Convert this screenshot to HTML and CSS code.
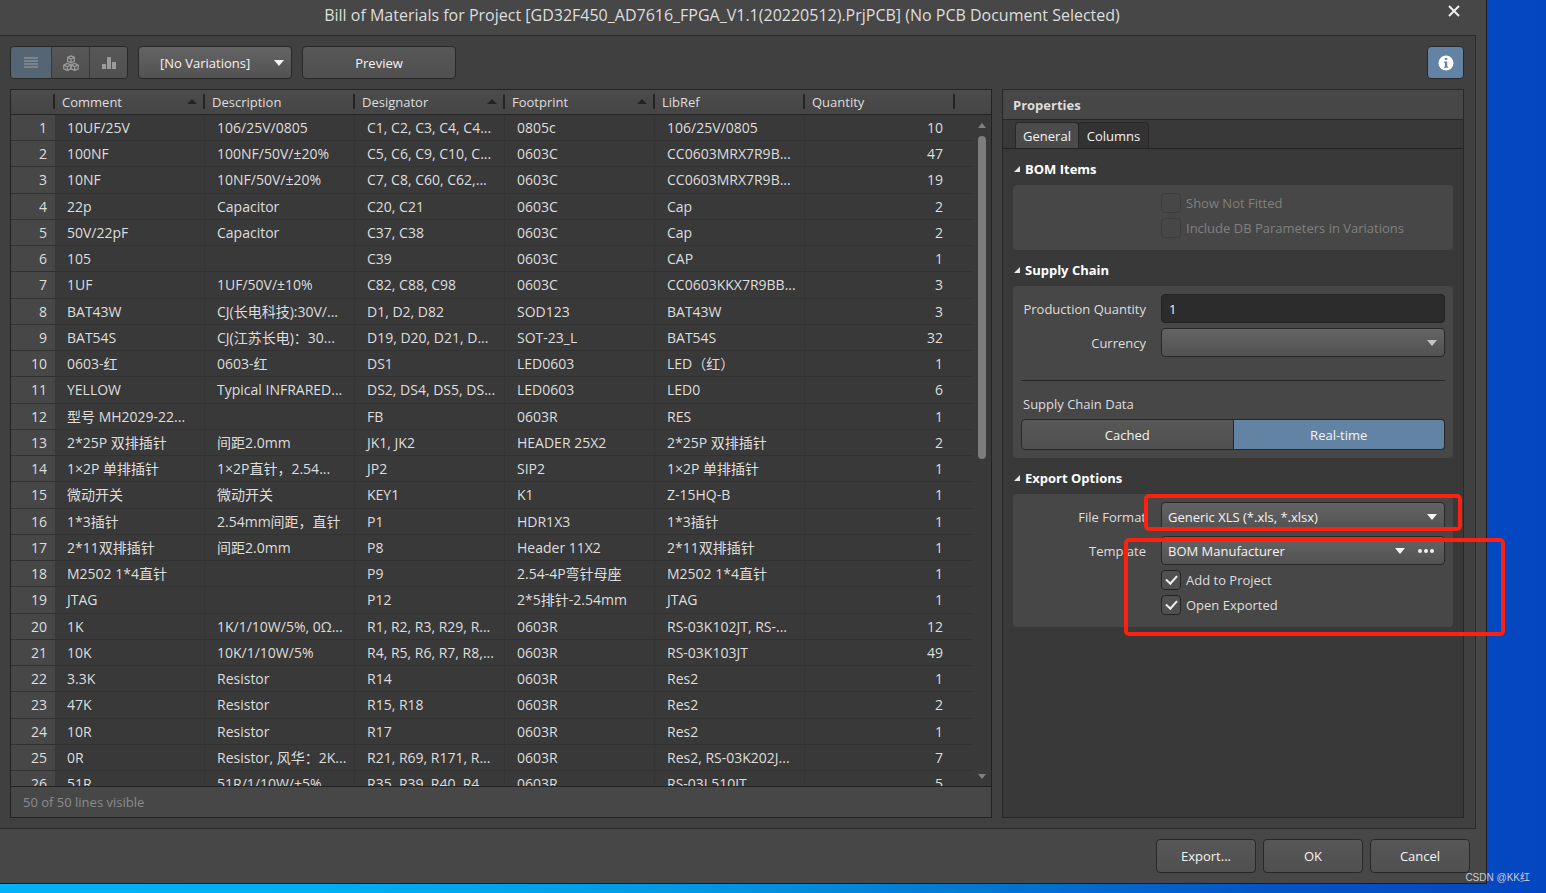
FILE: index.html
```html
<!DOCTYPE html>
<html lang="en">
<head>
  <meta charset="utf-8">
  <title>Bill of Materials</title>
  <link rel="stylesheet" href="styles.css">
</head>
<body>
  <div class="window">
    <header class="titlebar">
      <h1>Bill of Materials for Project [GD32F450_AD7616_FPGA_V1.1(20220512).PrjPCB] (No PCB Document Selected)</h1>
      <button type="button" class="close" aria-label="Close">
        <svg width="12" height="12" viewBox="0 0 12 12"><path d="M1 1L11 11M11 1L1 11" stroke="#f0f0f0" stroke-width="2" fill="none"/></svg>
      </button>
    </header>

    <main class="content">
      <div class="toolbar">
        <div class="views">
          <button type="button" class="active" aria-label="List view">
            <svg width="14" height="11" viewBox="0 0 14 11"><path d="M0 1h14M0 4h14M0 7h14M0 10h14" stroke="#a0a4a8" stroke-width="1.2"/></svg>
          </button>
          <button type="button" aria-label="Grouped view">
            <svg width="16" height="16" viewBox="0 0 16 16" fill="none" stroke="#9a9a9a" stroke-width="1.3" stroke-linejoin="round">
              <path d="M8 .8L11.4 2.4V6.2L8 7.8L4.6 6.2V2.4ZM4.6 2.4L8 4L11.4 2.4M8 4V7.8"/>
              <path d="M4.4 8.4L7.8 10V13.8L4.4 15.3L.8 13.8V10ZM.8 10L4.4 11.6L7.8 10M4.4 11.6V15.3"/>
              <path d="M11.6 8.4L15.2 10V13.8L11.6 15.3L8.2 13.8V10ZM8.2 10L11.6 11.6L15.2 10M11.6 11.6V15.3"/>
            </svg>
          </button>
          <button type="button" aria-label="Chart view">
            <svg width="14" height="12" viewBox="0 0 14 12" fill="#9a9a9a"><path d="M0 7h4v5H0zM5 0h4v12H5zM10 5h4v7h-4z"/></svg>
          </button>
        </div>
        <div class="select variations">
          <select aria-label="Variations"><option>[No Variations]</option></select>
          <svg class="caret" width="10" height="6" viewBox="0 0 10 6"><path d="M0 0h10L5 6z"/></svg>
        </div>
        <button type="button" class="preview">Preview</button>
        <button type="button" class="info" aria-label="Properties">
          <svg width="16" height="16" viewBox="0 0 16 16"><circle cx="8" cy="8" r="7.5" fill="#fff"/><path d="M6.9 3h2.3v2.1H6.9zM6 6.4h3.2v5h1v1.4H6v-1.4h1V7.8H6z" fill="#6283a4"/></svg>
        </button>
      </div>

      <div class="panels">
        <section class="bom">
          <div class="grid">
            <table>
              <colgroup><col class="num"><col><col><col><col><col><col><col class="rest"></colgroup>
              <thead>
                <tr>
                  <th></th>
                  <th class="sorted">Comment</th>
                  <th>Description</th>
                  <th class="sorted">Designator</th>
                  <th class="sorted">Footprint</th>
                  <th>LibRef</th>
                  <th>Quantity</th>
                  <th></th>
                </tr>
              </thead>
              <tbody>
                <tr><th>1</th><td>10UF/25V</td><td>106/25V/0805</td><td>C1, C2, C3, C4, C4...</td><td>0805c</td><td>106/25V/0805</td><td>10</td><td></td></tr>
                <tr><th>2</th><td>100NF</td><td>100NF/50V/±20%</td><td>C5, C6, C9, C10, C...</td><td>0603C</td><td>CC0603MRX7R9B...</td><td>47</td><td></td></tr>
                <tr><th>3</th><td>10NF</td><td>10NF/50V/±20%</td><td>C7, C8, C60, C62,...</td><td>0603C</td><td>CC0603MRX7R9B...</td><td>19</td><td></td></tr>
                <tr><th>4</th><td>22p</td><td>Capacitor</td><td>C20, C21</td><td>0603C</td><td>Cap</td><td>2</td><td></td></tr>
                <tr><th>5</th><td>50V/22pF</td><td>Capacitor</td><td>C37, C38</td><td>0603C</td><td>Cap</td><td>2</td><td></td></tr>
                <tr><th>6</th><td>105</td><td></td><td>C39</td><td>0603C</td><td>CAP</td><td>1</td><td></td></tr>
                <tr><th>7</th><td>1UF</td><td>1UF/50V/±10%</td><td>C82, C88, C98</td><td>0603C</td><td>CC0603KKX7R9BB...</td><td>3</td><td></td></tr>
                <tr><th>8</th><td>BAT43W</td><td>CJ(长电科技):30V/...</td><td>D1, D2, D82</td><td>SOD123</td><td>BAT43W</td><td>3</td><td></td></tr>
                <tr><th>9</th><td>BAT54S</td><td>CJ(江苏长电)：30...</td><td>D19, D20, D21, D...</td><td>SOT-23_L</td><td>BAT54S</td><td>32</td><td></td></tr>
                <tr><th>10</th><td>0603-红</td><td>0603-红</td><td>DS1</td><td>LED0603</td><td>LED（红）</td><td>1</td><td></td></tr>
                <tr><th>11</th><td>YELLOW</td><td>Typical INFRARED...</td><td>DS2, DS4, DS5, DS...</td><td>LED0603</td><td>LED0</td><td>6</td><td></td></tr>
                <tr><th>12</th><td>型号 MH2029-22...</td><td></td><td>FB</td><td>0603R</td><td>RES</td><td>1</td><td></td></tr>
                <tr><th>13</th><td>2*25P 双排插针</td><td>间距2.0mm</td><td>JK1, JK2</td><td>HEADER 25X2</td><td>2*25P 双排插针</td><td>2</td><td></td></tr>
                <tr><th>14</th><td>1×2P 单排插针</td><td>1×2P直针，2.54...</td><td>JP2</td><td>SIP2</td><td>1×2P 单排插针</td><td>1</td><td></td></tr>
                <tr><th>15</th><td>微动开关</td><td>微动开关</td><td>KEY1</td><td>K1</td><td>Z-15HQ-B</td><td>1</td><td></td></tr>
                <tr><th>16</th><td>1*3插针</td><td>2.54mm间距，直针</td><td>P1</td><td>HDR1X3</td><td>1*3插针</td><td>1</td><td></td></tr>
                <tr><th>17</th><td>2*11双排插针</td><td>间距2.0mm</td><td>P8</td><td>Header 11X2</td><td>2*11双排插针</td><td>1</td><td></td></tr>
                <tr><th>18</th><td>M2502 1*4直针</td><td></td><td>P9</td><td>2.54-4P弯针母座</td><td>M2502 1*4直针</td><td>1</td><td></td></tr>
                <tr><th>19</th><td>JTAG</td><td></td><td>P12</td><td>2*5排针-2.54mm</td><td>JTAG</td><td>1</td><td></td></tr>
                <tr><th>20</th><td>1K</td><td>1K/1/10W/5%, 0Ω...</td><td>R1, R2, R3, R29, R...</td><td>0603R</td><td>RS-03K102JT, RS-...</td><td>12</td><td></td></tr>
                <tr><th>21</th><td>10K</td><td>10K/1/10W/5%</td><td>R4, R5, R6, R7, R8,...</td><td>0603R</td><td>RS-03K103JT</td><td>49</td><td></td></tr>
                <tr><th>22</th><td>3.3K</td><td>Resistor</td><td>R14</td><td>0603R</td><td>Res2</td><td>1</td><td></td></tr>
                <tr><th>23</th><td>47K</td><td>Resistor</td><td>R15, R18</td><td>0603R</td><td>Res2</td><td>2</td><td></td></tr>
                <tr><th>24</th><td>10R</td><td>Resistor</td><td>R17</td><td>0603R</td><td>Res2</td><td>1</td><td></td></tr>
                <tr><th>25</th><td>0R</td><td>Resistor, 风华：2K...</td><td>R21, R69, R171, R...</td><td>0603R</td><td>Res2, RS-03K202J...</td><td>7</td><td></td></tr>
                <tr><th>26</th><td>51R</td><td>51R/1/10W/±5%</td><td>R35, R39, R40, R4...</td><td>0603R</td><td>RS-03L510JT</td><td>5</td><td></td></tr>
              </tbody>
            </table>
            <div class="scrollbar">
              <svg width="8" height="5" viewBox="0 0 8 5"><path d="M0 5h8L4 0z"/></svg>
              <div class="track"><div class="thumb"></div></div>
              <svg width="8" height="5" viewBox="0 0 8 5"><path d="M0 0h8L4 5z"/></svg>
            </div>
          </div>
          <div class="status">50 of 50 lines visible</div>
        </section>

        <aside class="properties">
          <h2>Properties</h2>
          <div class="tabs">
            <button type="button" class="active">General</button>
            <button type="button">Columns</button>
          </div>

          <h3>BOM Items</h3>
          <div class="group">
            <label class="check disabled"><input type="checkbox" disabled>Show Not Fitted</label>
            <label class="check disabled"><input type="checkbox" disabled>Include DB Parameters in Variations</label>
          </div>

          <h3>Supply Chain</h3>
          <div class="group supply">
            <div class="field">
              <label for="quantity">Production Quantity</label>
              <input type="text" id="quantity" value="1">
            </div>
            <div class="field">
              <label for="currency">Currency</label>
              <div class="select dim">
                <select id="currency"><option></option></select>
                <svg class="caret" width="10" height="6" viewBox="0 0 10 6"><path d="M0 0h10L5 6z"/></svg>
              </div>
            </div>
            <hr>
            <p>Supply Chain Data</p>
            <div class="toggle">
              <button type="button">Cached</button>
              <button type="button" class="active">Real-time</button>
            </div>
          </div>

          <h3>Export Options</h3>
          <div class="group export">
            <div class="field">
              <label for="format">File Format</label>
              <div class="select">
                <select id="format"><option>Generic XLS (*.xls, *.xlsx)</option></select>
                <svg class="caret" width="10" height="6" viewBox="0 0 10 6"><path d="M0 0h10L5 6z"/></svg>
              </div>
            </div>
            <div class="field">
              <label for="template">Template</label>
              <div class="select template">
                <select id="template"><option>BOM Manufacturer</option></select>
                <svg class="caret" width="10" height="6" viewBox="0 0 10 6"><path d="M0 0h10L5 6z"/></svg>
                <button type="button" class="more" aria-label="Browse">
                  <svg width="16" height="4" viewBox="0 0 16 4" fill="#f0f0f0"><circle cx="2" cy="2" r="2"/><circle cx="8" cy="2" r="2"/><circle cx="14" cy="2" r="2"/></svg>
                </button>
              </div>
            </div>
            <label class="check"><input type="checkbox" checked>Add to Project</label>
            <label class="check"><input type="checkbox" checked>Open Exported</label>
            <div class="mark mark-format"></div>
            <div class="mark mark-template"></div>
          </div>
        </aside>
      </div>
    </main>

    <footer class="actions">
      <button type="button">Export...</button>
      <button type="button">OK</button>
      <button type="button">Cancel</button>
    </footer>
  </div>
  <div class="watermark">CSDN @KK红</div>
</body>
</html>
```

FILE: styles.css
```css
* {
  box-sizing: border-box;
}
body {
  margin: 0;
  height: 100vh;
  padding: 0 59px 9px 0;
  overflow: hidden;
  background: linear-gradient(90deg, #00b2fa 0, #00b0f6 20%, #0098e6 45%, #0078d4 63%, #0454c6 82%, #0446c0 100%);
  color: #dedede;
  font-family: "Open Sans", "Noto Sans CJK SC", sans-serif;
  font-size: 13px;
  line-height: 20px;
}
h1, h2, h3, p {
  margin: 0;
}
button, input, select {
  font: inherit;
  color: #f4f4f4;
}
button {
  padding: 0;
  background: linear-gradient(#575757, #505050);
  border: 1px solid #282828;
  border-radius: 4px;
}
svg {
  display: block;
}

.window {
  display: flex;
  flex-direction: column;
  height: 100%;
  background: #474747;
  border-right: 1px solid #1c1c1c;
  border-bottom: 1px solid #1c1c1c;
}
.titlebar {
  display: flex;
  height: 35px;
  padding: 5px 22px 0 0;
}
.titlebar h1 {
  flex: 1;
  padding-left: 0;
  text-align: center;
  white-space: nowrap;
  font-size: 16px;
  font-weight: normal;
}
.close {
  width: 20px;
  height: 12px;
  display: flex;
  align-items: center;
  justify-content: center;
  background: none;
  border: none;
}

.content {
  flex: 1;
  min-height: 0;
  display: flex;
  flex-direction: column;
  gap: 10px;
  margin-right: 10px;
  padding: 10px 11px 10px 10px;
  background: #404040;
  border: solid #2a2a2a;
  border-width: 1px 1px 1px 0;
}
.toolbar {
  display: flex;
  gap: 10px;
  height: 33px;
}
.views {
  display: flex;
  width: 118px;
  border: 1px solid #282828;
  border-radius: 4px;
  overflow: hidden;
}
.views button {
  width: 38px;
  display: flex;
  align-items: center;
  justify-content: center;
  border: none;
  border-radius: 0;
}
.views button + button {
  border-left: 1px solid #383838;
}
.views .active {
  width: 40px;
  background: #566573;
}
.preview {
  width: 154px;
}
.info {
  width: 37px;
  margin-left: auto;
  display: flex;
  align-items: center;
  justify-content: center;
  background: #6283a4;
}

.select {
  position: relative;
  display: flex;
  height: 29px;
  background: linear-gradient(#646464, #525252);
  border: 1px solid #282828;
  border-radius: 4px;
}
.select select {
  appearance: none;
  flex: 1;
  min-width: 0;
  padding: 0 24px 0 6px;
  background: none;
  border: none;
}
.caret {
  position: absolute;
  top: 50%;
  right: 7px;
  margin-top: -3px;
  fill: #f4f4f4;
  pointer-events: none;
}
.dim .caret {
  fill: #c4c4c4;
}
.variations {
  width: 154px;
  height: 33px;
}
.variations select {
  padding-left: 21px;
}

.panels {
  flex: 1;
  min-height: 0;
  display: flex;
  gap: 10px;
}
.bom {
  flex: 1;
  min-width: 0;
  display: flex;
  flex-direction: column;
  background: #393939;
  border: 1px solid #222;
}
.grid {
  flex: 1;
  min-height: 0;
  position: relative;
  overflow: hidden;
}
table {
  width: 100%;
  table-layout: fixed;
  border-collapse: separate;
  border-spacing: 0;
}
col {
  width: 150px;
}
.num {
  width: 44px;
}
.rest {
  width: auto;
}
th {
  font-weight: normal;
}
thead th {
  position: relative;
  height: 25px;
  padding: 0 0 0 7px;
  text-align: left;
  background: linear-gradient(#4c4c4c, #454545);
  border-bottom: 1px solid #262626;
}
thead th::after {
  content: "";
  position: absolute;
  top: 4px;
  right: 0;
  width: 2px;
  height: 15px;
  background: #242424;
}
thead th:last-child::after {
  display: none;
}
.sorted::before {
  content: "";
  position: absolute;
  top: 9px;
  right: 8px;
  border: solid transparent;
  border-width: 0 5px 5px;
  border-bottom-color: #242424;
}
tbody tr {
  height: 26px;
}
tbody tr:nth-child(4n+3) {
  height: 27px;
}
tbody th, tbody td {
  padding: 0 0 0 12px;
  overflow: hidden;
  white-space: nowrap;
  font-size: 14px;
  border-bottom: 1px solid #323232;
}
tbody th {
  padding: 0 8px 0 0;
  text-align: right;
  background: #474747;
}
tbody td {
  border-right: 1px solid #343434;
}
tbody td:nth-child(7) {
  padding-right: 12px;
  text-align: right;
  border-right: none;
}
.scrollbar {
  position: absolute;
  top: 25px;
  right: 0;
  bottom: 0;
  width: 18px;
  padding: 8px 0 7px;
  display: flex;
  flex-direction: column;
  align-items: center;
  background: #393939;
  fill: #808080;
}
.track {
  flex: 1;
  width: 8px;
  padding: 8px 0 5px;
}
.thumb {
  height: 51%;
  background: #7c7c7c;
  border-radius: 4px;
}
.status {
  height: 31px;
  padding: 5px 12px;
  color: #8c8c8c;
  background: #474747;
  border-top: 1px solid #222;
}

.properties {
  width: 462px;
  background: #393939;
  border: 1px solid #282828;
}
.properties h2 {
  height: 30px;
  padding: 5px 10px;
  font-size: 13px;
  background: #474747;
  border-bottom: 1px solid #282828;
}
.tabs {
  display: flex;
  height: 29px;
  padding: 2px 12px 0;
  border-bottom: 1px solid #222;
}
.tabs button {
  width: 71px;
  background: #333;
  border-bottom: none;
  border-radius: 4px 4px 0 0;
}
.tabs .active {
  width: 64px;
  margin-right: -1px;
  background: #4b4b4b;
}
h3 {
  display: flex;
  align-items: center;
  gap: 5px;
  height: 36px;
  padding: 4px 11px 0;
  color: #fff;
  font-size: 13px;
}
h3::before {
  content: "";
  border: solid transparent;
  border-width: 0 0 6px 6px;
  border-bottom-color: #e8e8e8;
}
.group {
  display: flex;
  flex-direction: column;
  gap: 5px;
  margin: 0 10px;
  padding: 8px 8px 12px;
  background: #474747;
  border-radius: 4px;
}
.field {
  display: grid;
  grid-template-columns: 125px 1fr;
  gap: 15px;
  align-items: center;
}
.field label {
  text-align: right;
  white-space: nowrap;
}
.field input {
  min-width: 0;
  height: 29px;
  padding: 0 7px;
  background: #2c2c2c;
  border: 1px solid #222;
  border-radius: 4px;
}
.supply {
  padding-bottom: 8px;
}
hr {
  width: 100%;
  height: 1px;
  margin: 18px 0 8px;
  background: #262626;
  border: none;
}
.supply p {
  padding-left: 2px;
}
.toggle {
  display: flex;
  height: 31px;
}
.toggle button {
  flex: 1;
  border-radius: 4px 0 0 4px;
}
.toggle .active {
  background: #6283a4;
  border-left: none;
  border-radius: 0 4px 4px 0;
}
.check {
  display: flex;
  align-items: center;
  gap: 5px;
  margin-left: 140px;
}
.check input {
  appearance: none;
  display: grid;
  place-items: center;
  width: 20px;
  height: 20px;
  margin: 0;
  background: #505050;
  border: 1px solid #242424;
  border-radius: 4px;
}
.check input:checked::after {
  content: "";
  width: 5px;
  height: 9px;
  margin-bottom: 3px;
  border: solid #f0f0f0;
  border-width: 0 2px 2px 0;
  transform: rotate(42deg);
}
.disabled {
  color: #808080;
}
.disabled input {
  background: #474747;
  border-color: #3d3d3d;
}
.template select {
  padding-right: 60px;
}
.template .caret {
  right: 39px;
}
.more {
  position: absolute;
  top: 12px;
  right: 10px;
  background: none;
  border: none;
}

/* red callouts over the export settings */
.export {
  position: relative;
}
.mark {
  position: absolute;
  border: 4px solid #ff2010;
  border-radius: 5px;
  pointer-events: none;
}
.mark-format {
  top: 0;
  left: 131px;
  right: -9px;
  height: 37px;
}
.mark-template {
  top: 44px;
  left: 111px;
  right: -52px;
  height: 98px;
}

.actions {
  display: flex;
  justify-content: flex-end;
  gap: 7px;
  padding: 10px 16px;
}
.actions button {
  width: 100px;
  height: 34px;
}
.watermark {
  position: absolute;
  right: 16px;
  bottom: 5px;
  color: #c8ccd4;
  font-family: "Liberation Sans", "Noto Sans CJK SC", sans-serif;
  font-size: 10px;
}
```
